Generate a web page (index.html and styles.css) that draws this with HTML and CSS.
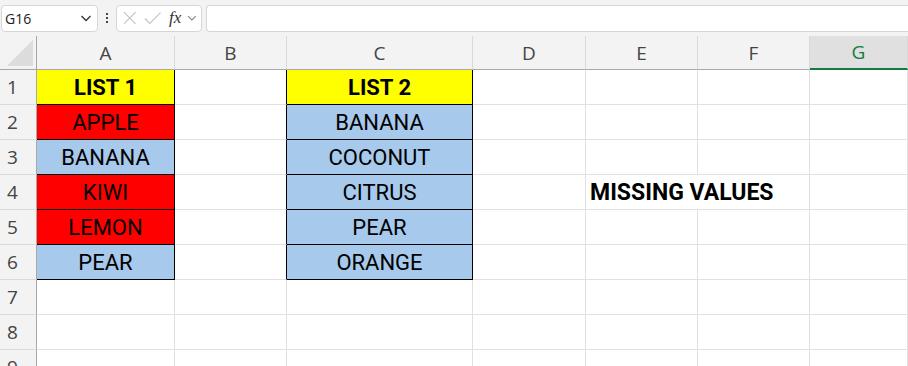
FILE: index.html
```html
<!DOCTYPE html>
<html lang="en">
<head>
    <meta charset="UTF-8">
    <title>Missing values</title>
    <link rel="stylesheet" href="styles.css">
</head>
<body>
    <div class="formula-bar">
        <div class="name-box">
            <span>G16</span>
            <svg class="chev" width="12" height="8" viewBox="0 0 12 8"><path d="M1.5 2 L6 6.5 L10.5 2" fill="none" stroke="#333" stroke-width="1.3"/></svg>
        </div>
        <div class="dots"><i></i><i></i><i></i></div>
        <div class="fx-box">
            <svg width="16" height="16" viewBox="0 0 16 16"><path d="M2 2 L14 14 M14 2 L2 14" stroke="#c4c4c4" stroke-width="1.2"/></svg>
            <svg width="18" height="16" viewBox="0 0 18 16"><path d="M1 8.5 L6 13.5 L17 2.5" fill="none" stroke="#c4c4c4" stroke-width="1.2"/></svg>
            <span class="fx">fx</span>
            <svg width="10" height="8" viewBox="0 0 10 8"><path d="M1 2 L5 6 L9 2" fill="none" stroke="#888" stroke-width="1.1"/></svg>
        </div>
        <div class="formula-input"></div>
    </div>

    <div class="sheet">
        <!-- column headers -->
        <div class="corner"><span class="tri"></span></div>
        <div class="col-head">A</div>
        <div class="col-head">B</div>
        <div class="col-head">C</div>
        <div class="col-head">D</div>
        <div class="col-head">E</div>
        <div class="col-head">F</div>
        <div class="col-head active">G</div>

        <div class="row-head">1</div>
        <div class="cell fill yellow bold">LIST 1</div>
        <div class="cell edge"></div>
        <div class="cell fill yellow bold">LIST 2</div>
        <div class="cell"></div><div class="cell"></div><div class="cell"></div><div class="cell"></div>

        <div class="row-head">2</div>
        <div class="cell fill red">APPLE</div>
        <div class="cell edge"></div>
        <div class="cell fill blue">BANANA</div>
        <div class="cell"></div><div class="cell"></div><div class="cell"></div><div class="cell"></div>

        <div class="row-head">3</div>
        <div class="cell fill blue">BANANA</div>
        <div class="cell edge"></div>
        <div class="cell fill blue">COCONUT</div>
        <div class="cell"></div><div class="cell"></div><div class="cell"></div><div class="cell"></div>

        <div class="row-head">4</div>
        <div class="cell fill red">KIWI</div>
        <div class="cell edge"></div>
        <div class="cell fill blue">CITRUS</div>
        <div class="cell"></div>
        <div class="cell label">MISSING VALUES</div>
        <div class="cell"></div>
        <div class="cell"></div>

        <div class="row-head">5</div>
        <div class="cell fill red">LEMON</div>
        <div class="cell edge"></div>
        <div class="cell fill blue">PEAR</div>
        <div class="cell"></div><div class="cell"></div><div class="cell"></div><div class="cell"></div>

        <div class="row-head">6</div>
        <div class="cell fill blue">PEAR</div>
        <div class="cell edge"></div>
        <div class="cell fill blue">ORANGE</div>
        <div class="cell"></div><div class="cell"></div><div class="cell"></div><div class="cell"></div>

        <div class="row-head">7</div>
        <div class="cell"></div><div class="cell"></div><div class="cell"></div><div class="cell"></div><div class="cell"></div><div class="cell"></div><div class="cell"></div>

        <div class="row-head">8</div>
        <div class="cell"></div><div class="cell"></div><div class="cell"></div><div class="cell"></div><div class="cell"></div><div class="cell"></div><div class="cell"></div>

        <div class="row-head last">9</div>
        <div class="cell"></div><div class="cell"></div><div class="cell"></div><div class="cell"></div><div class="cell"></div><div class="cell"></div><div class="cell"></div>
    </div>
</body>
</html>
```

FILE: styles.css
```css
body {
    margin: 0;
    padding: 0;
    background-color: #f3f3f3;
    font-family: "Open Sans", "Noto Sans", sans-serif;
    overflow: hidden;
}

/* formula bar */
.formula-bar {
    display: flex;
    align-items: center;
    height: 36px;
    padding: 0 0 0 1px;
    box-sizing: border-box;
}

.name-box {
    display: flex;
    align-items: center;
    justify-content: space-between;
    width: 97px;
    height: 27px;
    box-sizing: border-box;
    padding: 0 5px 0 3px;
    background-color: #fff;
    border: 1px solid #d6d6d6;
    border-radius: 4px;
    font-size: 14px;
    color: #222;
}

.dots {
    display: flex;
    flex-direction: column;
    gap: 2px;
    margin: 0 8px 0 8px;
}

.dots i {
    display: block;
    width: 2px;
    height: 2px;
    background-color: #444;
}

.fx-box {
    display: flex;
    align-items: center;
    gap: 6px;
    width: 86px;
    height: 27px;
    box-sizing: border-box;
    padding: 0 4px 0 5px;
    background-color: #fff;
    border: 1px solid #d6d6d6;
    border-radius: 4px;
}

.fx {
    font-family: "Liberation Serif", serif;
    font-style: italic;
    font-size: 17px;
    color: #333;
    margin-left: 2px;
}

.formula-input {
    flex: 1;
    height: 27px;
    box-sizing: border-box;
    margin-left: 4px;
    background-color: #fff;
    border: 1px solid #d6d6d6;
    border-right: none;
    border-radius: 4px 0 0 4px;
}

/* grid */
.sheet {
    display: grid;
    grid-template-columns: 37px 138px 112px 186px 113px 112px 112px 1fr;
    grid-template-rows: 34px repeat(8, 35px) 17px;
    background-color: #fff;
}

.corner {
    background-color: #f3f3f3;
    border-right: 1px solid #a8a8a8;
    border-bottom: 1px solid #a8a8a8;
    position: relative;
}

.tri {
    position: absolute;
    right: 3px;
    bottom: 3px;
    width: 0;
    height: 0;
    border-left: 26px solid transparent;
    border-bottom: 26px solid #dcdcdc;
}

.col-head {
    display: flex;
    align-items: center;
    justify-content: center;
    background-color: #f3f3f3;
    border-right: 1px solid #dadada;
    border-bottom: 1px solid #a8a8a8;
    font-size: 19px;
    color: #444;
}

.col-head.active {
    background-color: #e0e0e0;
    color: #107c41;
    border-bottom: 2px solid #107c41;
}

.row-head {
    display: flex;
    align-items: center;
    justify-content: flex-start;
    padding-left: 7px;
    background-color: #f3f3f3;
    border-right: 1px solid #a8a8a8;
    border-bottom: 1px solid #dadada;
    font-size: 19px;
    color: #444;
}

.row-head.last {
    align-items: flex-start;
    line-height: 34px;
    overflow: hidden;
}

.cell {
    display: flex;
    align-items: center;
    justify-content: center;
    border-right: 1px solid #e1e1e1;
    border-bottom: 1px solid #e1e1e1;
    font-family: Roboto, "Noto Sans", sans-serif;
    font-size: 22px;
    color: #000;
    white-space: nowrap;
}

.cell.fill {
    border-right: 1px solid #000;
    border-bottom: 1px solid #000;
}

.cell.edge {
    border-right: 1px solid #000;
}

.yellow { background-color: #ffff00; }
.red { background-color: #ff0000; }
.blue { background-color: #a6c9ec; }

.bold {
    font-weight: bold;
}

.cell.label {
    justify-content: flex-start;
    padding-left: 4px;
    font-weight: bold;
    font-size: 23px;
    border-right: none;
    overflow: visible;
}
```
